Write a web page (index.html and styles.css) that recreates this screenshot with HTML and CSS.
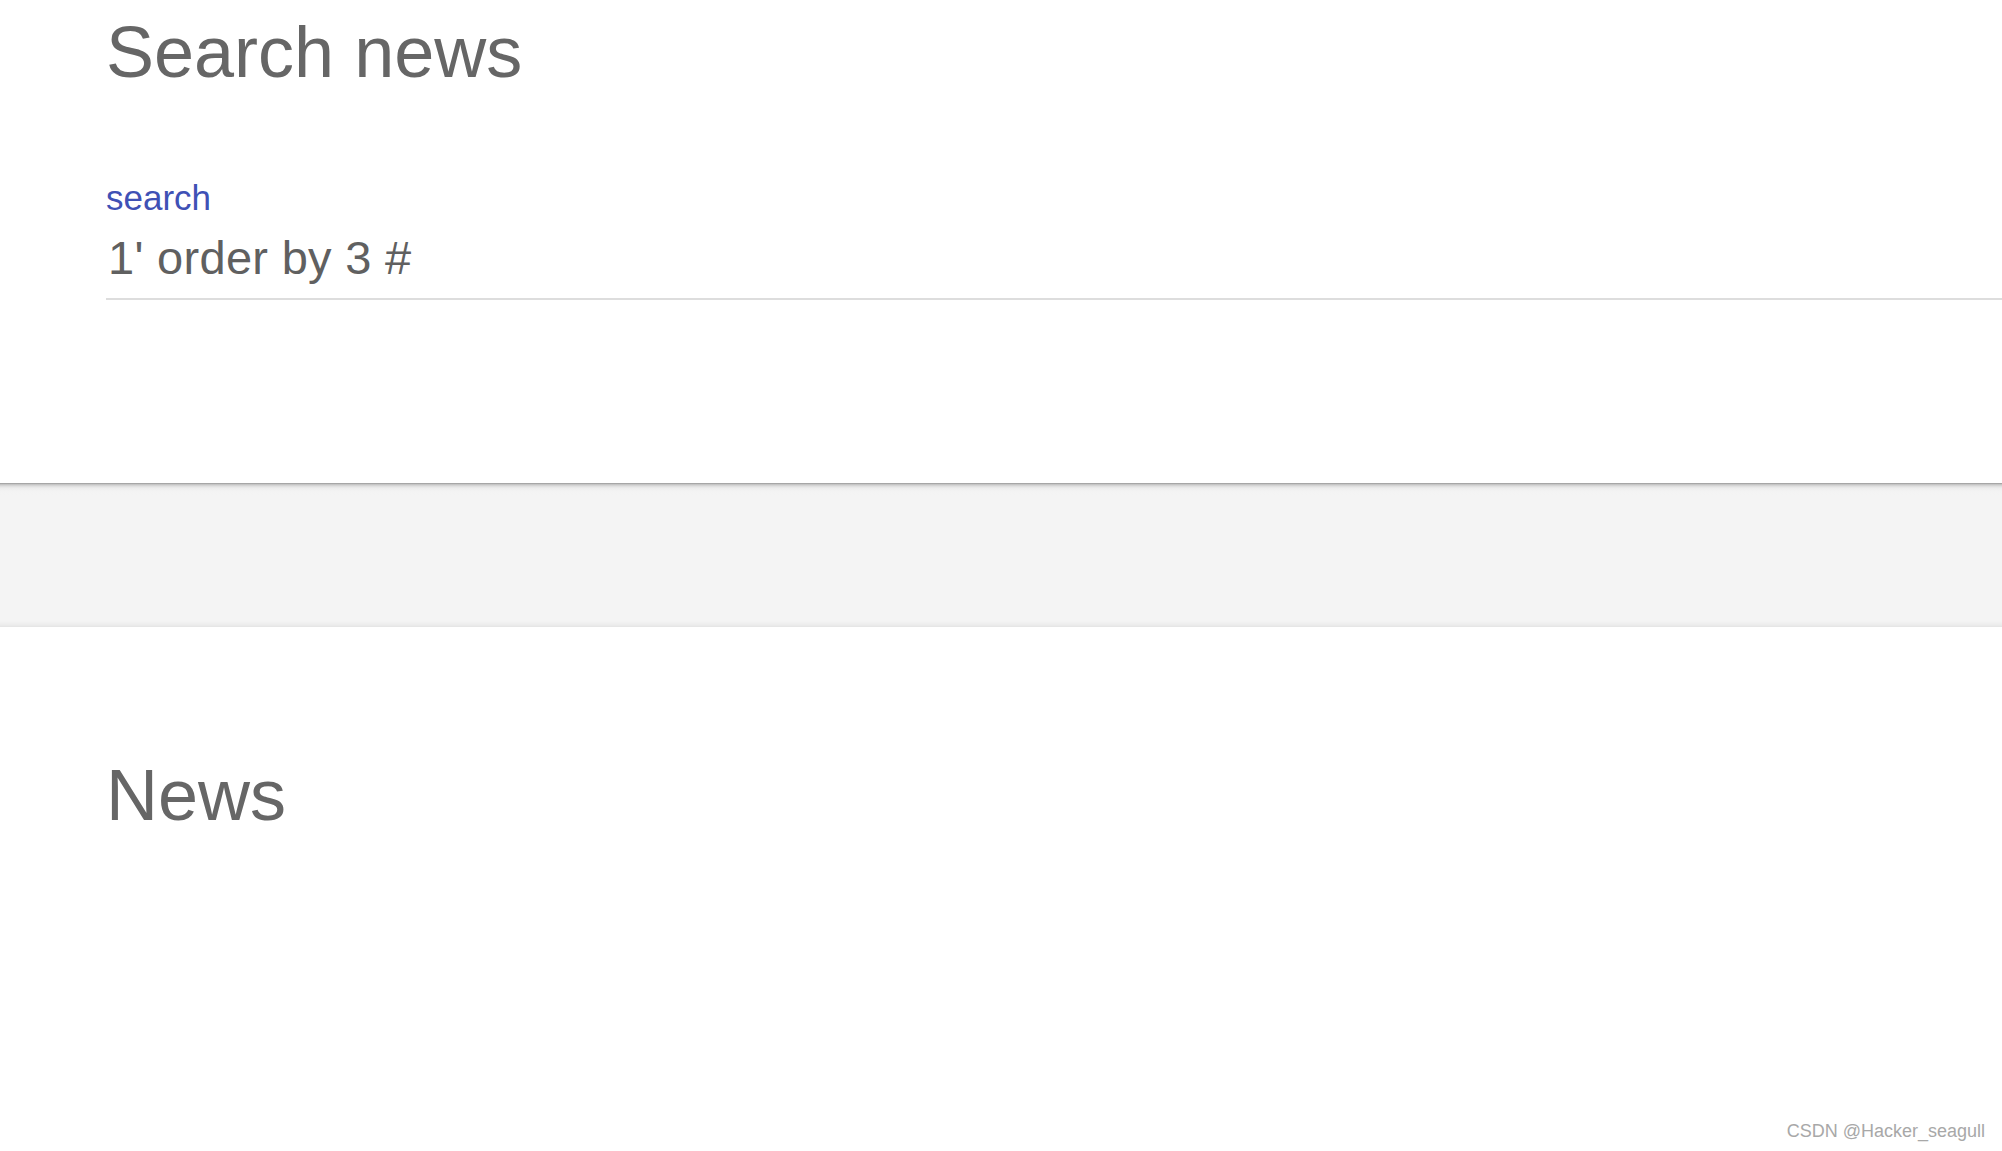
FILE: index.html
```html
<!DOCTYPE html>
<html>
<head>
<meta charset="utf-8">
<link rel="stylesheet" href="styles.css">
</head>
<body>
<section class="search-section">
  <h1 class="title">Search news</h1>
  <div class="field">
    <label class="field-label">search</label>
    <div class="field-input">1' order by 3 #</div>
  </div>
</section>
<div class="band"></div>
<section class="news-section">
  <h2 class="title">News</h2>
</section>
<div class="watermark">CSDN @Hacker_seagull</div>
</body>
</html>
```
FILE: styles.css
```css
html, body {
  margin: 0;
  padding: 0;
  background: #fff;
  font-family: "Liberation Sans", Arial, sans-serif;
  overflow: hidden;
}
body {
  width: 2002px;
  height: 1151px;
  position: relative;
}
.search-section {
  padding-left: 106px;
  padding-top: 16px;
  height: 467px;
  box-sizing: border-box;
}
.title {
  margin: 0;
  font-size: 72px;
  line-height: 72px;
  font-weight: 400;
  color: #666;
}
.field {
  margin-top: 90px;
  display: flex;
  flex-direction: column;
}
.field-label {
  font-size: 35px;
  line-height: 40px;
  color: #3f51b5;
}
.field-input {
  margin-top: 12px;
  font-size: 47px;
  line-height: 56px;
  letter-spacing: 0.3px;
  color: #606060;
  padding-bottom: 12px;
  border-bottom: 2px solid #dddddd;
  padding-left: 2px;
}
.band {
  margin-top: 16px;
  height: 144px;
  background: linear-gradient(to bottom, #8f8f8f 0, #bdbdbd 1px, #dcdcdc 3px, #ececec 5px, #f3f3f3 8px, #f4f4f4 12px, #f4f4f4 calc(100% - 6px), #ececec calc(100% - 2px), #e4e4e4 100%);
}
.news-section {
  padding-left: 106px;
  padding-top: 132px;
}
.watermark {
  position: absolute;
  right: 17px;
  bottom: 9px;
  font-size: 18px;
  line-height: 22px;
  color: #a8a8a8;
}
```
